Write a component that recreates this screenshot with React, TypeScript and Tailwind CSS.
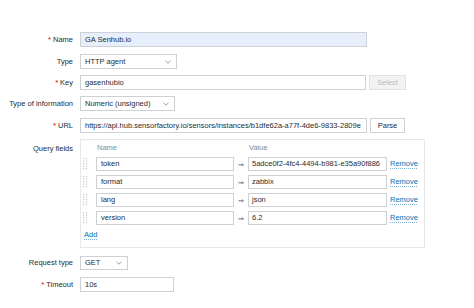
import React from 'react'

const font = "font-['Liberation_Sans',Arial,sans-serif]"

function Chevron() {
  return (
    <svg width="6" height="4" viewBox="0 0 6 4" className="shrink-0">
      <path d="M0.5 0.8 L3 3.2 L5.5 0.8" fill="none" stroke="#8a9399" strokeWidth="0.9" />
    </svg>
  )
}

function Handle() {
  const dots = []
  for (let r = 0; r < 5; r++) {
    for (let c = 0; c < 2; c++) {
      dots.push(<rect key={`${r}-${c}`} x={c * 3} y={r * 2.5} width="1.2" height="1.2" fill="#c3c8cc" />)
    }
  }
  return (
    <svg width="5" height="12" viewBox="0 0 5 12" className="shrink-0">
      {dots}
    </svg>
  )
}

function Label({ text, required }: { text: string; required?: boolean }) {
  return (
    <div className="w-[73px] shrink-0 text-right leading-none whitespace-nowrap">
      {required && <span className="text-[#d40000] mr-[2px]">*</span>}
      {text}
    </div>
  )
}

function Field({ value, w, bg = 'bg-white' }: { value: string; w: string; bg?: string }) {
  return (
    <div className={`${w} ${bg} h-full border border-[#cdd1d4] pl-[4px] flex items-center overflow-hidden whitespace-nowrap`}>
      {value}
    </div>
  )
}

function Select({ value, w }: { value: string; w: string }) {
  return (
    <div className={`${w} h-full bg-white border border-[#cdd1d4] pl-[4px] pr-[5px] flex items-center justify-between whitespace-nowrap`}>
      <span>{value}</span>
      <Chevron />
    </div>
  )
}

const query = [
  { name: 'token', value: '5adce0f2-4fc4-4494-b981-e35a90f886' },
  { name: 'format', value: 'zabbix' },
  { name: 'lang', value: 'json' },
  { name: 'version', value: '6.2' },
]

export default function App() {
  return (
    <div className={`${font} w-[474px] h-[308px] bg-white text-[7.5px] text-[#1f2c33] pt-[32px] overflow-hidden`}>
      <div className="flex items-center h-[15px] gap-[7px]">
        <Label text="Name" required />
        <Field value="GA Senhub.io" w="w-[287px]" bg="bg-[#e8effc]" />
      </div>

      <div className="flex items-center h-[15px] gap-[7px] mt-[7px]">
        <Label text="Type" />
        <Select value="HTTP agent" w="w-[97px]" />
      </div>

      <div className="flex items-center h-[15px] gap-[7px] mt-[6px]">
        <Label text="Key" required />
        <Field value="gasenhubio" w="w-[286px]" />
        <div className="ml-[-4px] w-[37px] h-full bg-[#f2f3f4] border border-[#e0e3e5] text-[#b8bcbf] flex items-center justify-center">
          Select
        </div>
      </div>

      <div className="flex items-center h-[15px] gap-[7px] mt-[6px]">
        <Label text="Type of information" />
        <Select value="Numeric (unsigned)" w="w-[95px]" />
      </div>

      <div className="flex items-center h-[15px] gap-[7px] mt-[7px]">
        <Label text="URL" required />
        <Field value="https://api.hub.sensorfactory.io/sensors/instances/b1dfe62a-a77f-4de6-9833-2809e" w="w-[287px]" />
        <div className="ml-[-4px] w-[35px] h-full bg-white border border-[#cdd1d4] flex items-center justify-center">
          Parse
        </div>
      </div>

      {/* Query fields */}
      <div className="flex items-start gap-[7px] mt-[6px]">
        <div className="pt-[6px]">
          <Label text="Query fields" />
        </div>
        <div className="w-[345px] border border-[#e6e9eb] pt-[3px] pb-[7px]">
          <div className="flex h-[10px] items-center text-[#7b8e98]">
            <span className="ml-[16px] w-[152px]">Name</span>
            <span>Value</span>
          </div>
          <div className="flex flex-col gap-[4px] mt-[4px]">
            {query.map(q => (
              <div key={q.name} className="flex items-center h-[14px]">
                <div className="ml-[2px] w-[5px] flex items-center">
                  <Handle />
                </div>
                <div className="ml-[8px] w-[138px] h-full bg-white border border-[#cdd1d4] pl-[4px] flex items-center overflow-hidden whitespace-nowrap">
                  {q.name}
                </div>
                <div className="w-[14px] text-center text-[#4a555c] text-[7px] leading-none">⇒</div>
                <div className="w-[139px] h-full bg-white border border-[#cdd1d4] pl-[3px] flex items-center overflow-hidden whitespace-nowrap">
                  {q.value}
                </div>
                <span className="ml-[3px] text-[#0275b8] underline decoration-dotted decoration-[#7fb3d6] underline-offset-[1.5px]">
                  Remove
                </span>
              </div>
            ))}
          </div>
          <div className="h-[10px] mt-[5px] ml-[3px] flex items-center">
            <span className="text-[#0275b8] underline decoration-dotted decoration-[#7fb3d6] underline-offset-[1.5px]">Add</span>
          </div>
        </div>
      </div>

      <div className="flex items-center h-[14px] gap-[7px] mt-[8px]">
        <Label text="Request type" />
        <Select value="GET" w="w-[48px]" />
      </div>

      <div className="flex items-center h-[15px] gap-[7px] mt-[7px]">
        <Label text="Timeout" required />
        <Field value="10s" w="w-[94px]" />
      </div>
    </div>
  )
}
